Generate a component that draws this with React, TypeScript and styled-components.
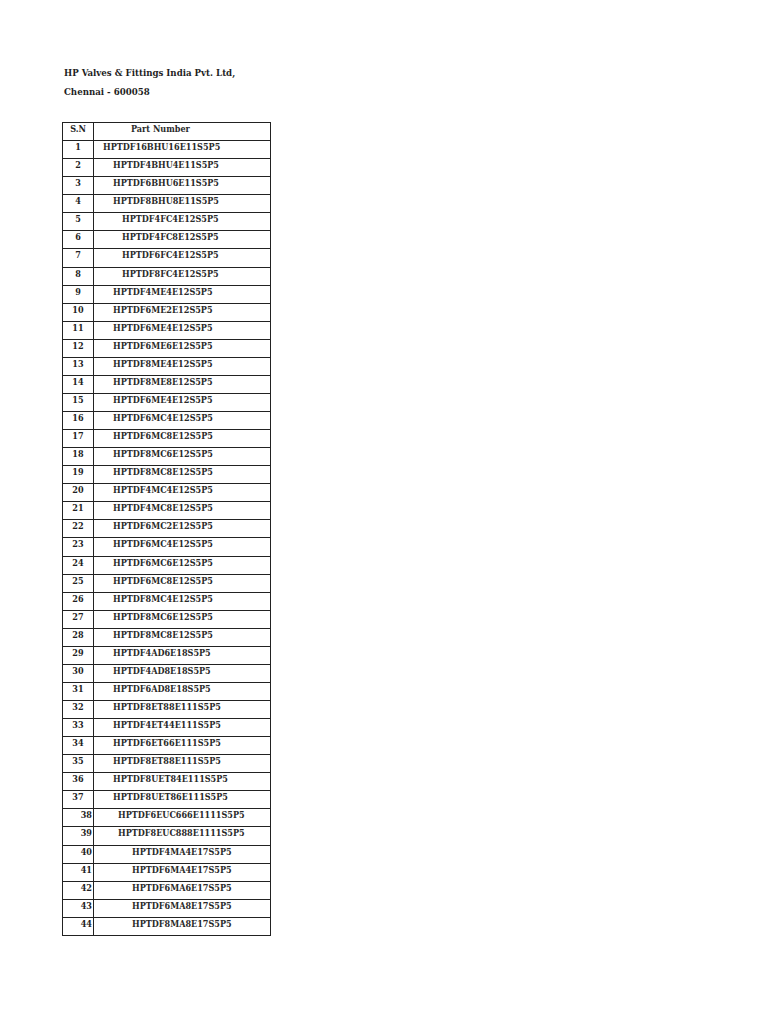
import React from 'react';
import styled, { createGlobalStyle } from 'styled-components';

const GlobalStyle = createGlobalStyle`
    html, body {
        margin: 0;
        padding: 0;
        background: #ffffff;
    }
    body {
        font-family: "DejaVu Serif", "Liberation Serif", serif;
        color: #1f1f1f;
    }
`;

const Page = styled.div`
    width: 768px;
    min-height: 1024px;
    padding: 63px 0 0 64px;
    box-sizing: border-box;
`;

const Heading = styled.div`
    font-size: 9.6px;
    font-weight: bold;
    font-stretch: condensed;
    line-height: 19px;
`;

const Sheet = styled.table`
    margin-top: 21px;
    margin-left: -2px;
    width: 209px;
    border-collapse: collapse;
    font-size: 9px;
    font-weight: bold;
    font-stretch: condensed;
`;

const Row = styled.tr`
    height: 18.07px;
`;

const NumCell = styled.td<{ $right?: boolean }>`
    width: 29px;
    border: 1px solid #222;
    padding: 0 ${p => (p.$right ? '1px' : '0')} 5px 0;
    text-align: ${p => (p.$right ? 'right' : 'center')};
    vertical-align: middle;
    line-height: 10px;
`;

const PartCell = styled.td<{ $indent: number }>`
    border: 1px solid #222;
    padding: 0 0 5px ${p => p.$indent}px;
    text-align: left;
    vertical-align: middle;
    line-height: 10px;
    white-space: nowrap;
    color: #2a2a2a;
`;

const parts: string[] = [
    'HPTDF16BHU16E11S5P5',
    'HPTDF4BHU4E11S5P5',
    'HPTDF6BHU6E11S5P5',
    'HPTDF8BHU8E11S5P5',
    'HPTDF4FC4E12S5P5',
    'HPTDF4FC8E12S5P5',
    'HPTDF6FC4E12S5P5',
    'HPTDF8FC4E12S5P5',
    'HPTDF4ME4E12S5P5',
    'HPTDF6ME2E12S5P5',
    'HPTDF6ME4E12S5P5',
    'HPTDF6ME6E12S5P5',
    'HPTDF8ME4E12S5P5',
    'HPTDF8ME8E12S5P5',
    'HPTDF6ME4E12S5P5',
    'HPTDF6MC4E12S5P5',
    'HPTDF6MC8E12S5P5',
    'HPTDF8MC6E12S5P5',
    'HPTDF8MC8E12S5P5',
    'HPTDF4MC4E12S5P5',
    'HPTDF4MC8E12S5P5',
    'HPTDF6MC2E12S5P5',
    'HPTDF6MC4E12S5P5',
    'HPTDF6MC6E12S5P5',
    'HPTDF6MC8E12S5P5',
    'HPTDF8MC4E12S5P5',
    'HPTDF8MC6E12S5P5',
    'HPTDF8MC8E12S5P5',
    'HPTDF4AD6E18S5P5',
    'HPTDF4AD8E18S5P5',
    'HPTDF6AD8E18S5P5',
    'HPTDF8ET88E111S5P5',
    'HPTDF4ET44E111S5P5',
    'HPTDF6ET66E111S5P5',
    'HPTDF8ET88E111S5P5',
    'HPTDF8UET84E111S5P5',
    'HPTDF8UET86E111S5P5',
    'HPTDF6EUC666E1111S5P5',
    'HPTDF8EUC888E1111S5P5',
    'HPTDF4MA4E17S5P5',
    'HPTDF6MA4E17S5P5',
    'HPTDF6MA6E17S5P5',
    'HPTDF6MA8E17S5P5',
    'HPTDF8MA8E17S5P5',
];

// left offset of the part number inside its cell, as typed in the sheet
const indentFor = (n: number) => {
    if (n === 1) return 9;
    if (n >= 5 && n <= 8) return 28;
    if (n === 38 || n === 39) return 24;
    if (n >= 40) return 38;
    return 19;
};

export default function App() {
    return (<>
        <GlobalStyle />
        <Page>
            <Heading>HP Valves &amp; Fittings India Pvt. Ltd,</Heading>
            <Heading>Chennai - 600058</Heading>
            <Sheet>
                <tbody>
                    <Row>
                        <NumCell>S.N</NumCell>
                        <PartCell $indent={37}>Part Number</PartCell>
                    </Row>
                    { parts.map((part, i) => (<Row key={ i }>
                        <NumCell $right={ i + 1 >= 38 }>{ i + 1 }</NumCell>
                        <PartCell $indent={ indentFor(i + 1) }>{ part }</PartCell>
                    </Row>)) }
                </tbody>
            </Sheet>
        </Page>
    </>);
}
